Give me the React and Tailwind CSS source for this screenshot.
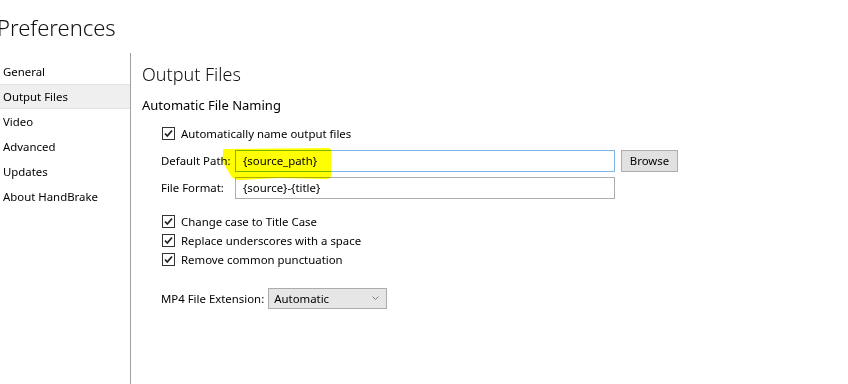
import React, { useState } from "react";

const Check = ({ checked, onChange, label }) => (
  <label className="flex items-center h-[19px] cursor-default">
    <span
      onClick={onChange}
      className="w-[13px] h-[13px] border border-[#333333] bg-white flex items-center justify-center"
    >
      {checked && (
        <svg width="11" height="11" viewBox="0 0 11 11">
          <path d="M2 5.5 L4.3 8 L9 2.5" fill="none" stroke="#222" strokeWidth="1.8" />
        </svg>
      )}
    </span>
    <span className="ml-[6px] text-[11.4px] text-black">{label}</span>
  </label>
);

const navItems = ["General", "Output Files", "Video", "Advanced", "Updates", "About HandBrake"];

const App = () => {
  const [active, setActive] = useState("Output Files");
  const [opts, setOpts] = useState({
    autoName: true,
    titleCase: true,
    underscores: true,
    punctuation: true,
  });

  const toggle = (k) => setOpts({ ...opts, [k]: !opts[k] });

  return (
    <div
      className="w-[848px] h-[384px] bg-white overflow-hidden flex flex-col text-black"
      style={{ fontFamily: '"Noto Sans", "Open Sans", sans-serif' }}
    >
      <h1 className="text-[22px] font-light leading-[32px] -ml-[3px] pt-[11px] h-[53px] text-[#111]">
        Preferences
      </h1>

      <div className="flex flex-1">
        {/* sidebar */}
        <div className="w-[131px] border-r border-[#a0a0a0] pt-[6px] flex flex-col">
          {navItems.map((item) => (
            <div
              key={item}
              onClick={() => setActive(item)}
              className={`h-[25px] flex items-center pl-[3px] text-[11.4px] ${
                active === item ? "bg-[#efefef] border-y border-[#e3e3e3]" : ""
              }`}
            >
              {item}
            </div>
          ))}
        </div>

        {/* content */}
        <div className="flex-1 pl-[11px] pt-[9px]">
          <h2 className="text-[18px] font-light leading-[24px] text-[#111]">Output Files</h2>
          <h3 className="text-[13px] leading-[18px] mt-[10px]">Automatic File Naming</h3>

          <div className="pl-[20px] mt-[10px]">
            <Check
              checked={opts.autoName}
              onChange={() => toggle("autoName")}
              label="Automatically name output files"
            />

            <div className="flex flex-col gap-[5px] mt-[7px] -ml-[1px] relative">
              <div className="flex items-center">
                <span className="w-[74px] text-[11.4px]">Default Path:</span>
                <div className="w-[380px] h-[22px] border border-[#7eb4ea] flex items-center pl-[7px] text-[11.4px]">
                  {"{source_path}"}
                </div>
                <button className="ml-[6px] w-[57px] h-[22px] bg-[#e1e1e1] border border-[#adadad] text-[11.4px]">
                  Browse
                </button>
              </div>
              <div className="flex items-center">
                <span className="w-[74px] text-[11.4px]">File Format:</span>
                <div className="w-[380px] h-[22px] border border-[#abadb3] flex items-center pl-[7px] text-[11.4px]">
                  {"{source}-{title}"}
                </div>
              </div>

              {/* marker highlight */}
              <svg
                className="absolute left-[58px] -top-[2px] mix-blend-multiply pointer-events-none"
                width="114"
                height="33"
                viewBox="0 0 114 33"
              >
                <path
                  d="M4 1 L110 0 Q113 1 112 5 L112 28 Q111 32 104 31 L60 30 L20 32 Q14 31 12 28 L6 18 Q1 12 4 8 Z"
                  fill="#ffff00"
                />
              </svg>
            </div>

            <div className="mt-[13px] flex flex-col">
              <Check
                checked={opts.titleCase}
                onChange={() => toggle("titleCase")}
                label="Change case to Title Case"
              />
              <Check
                checked={opts.underscores}
                onChange={() => toggle("underscores")}
                label="Replace underscores with a space"
              />
              <Check
                checked={opts.punctuation}
                onChange={() => toggle("punctuation")}
                label="Remove common punctuation"
              />
            </div>

            <div className="flex items-center mt-[19px] -ml-[1px]">
              <span className="text-[11.4px] mr-[4px]">MP4 File Extension:</span>
              <div className="w-[119px] h-[21px] bg-[#e6e6e6] border border-[#acacac] flex items-center justify-between pl-[5px] pr-[7px] text-[11.4px]">
                <span>Automatic</span>
                <svg width="7" height="5" viewBox="0 0 7 5">
                  <path d="M0.5 0.5 L3.5 3.5 L6.5 0.5" fill="none" stroke="#808080" strokeWidth="1" />
                </svg>
              </div>
            </div>
          </div>
        </div>
      </div>
    </div>
  );
};

export default App;
